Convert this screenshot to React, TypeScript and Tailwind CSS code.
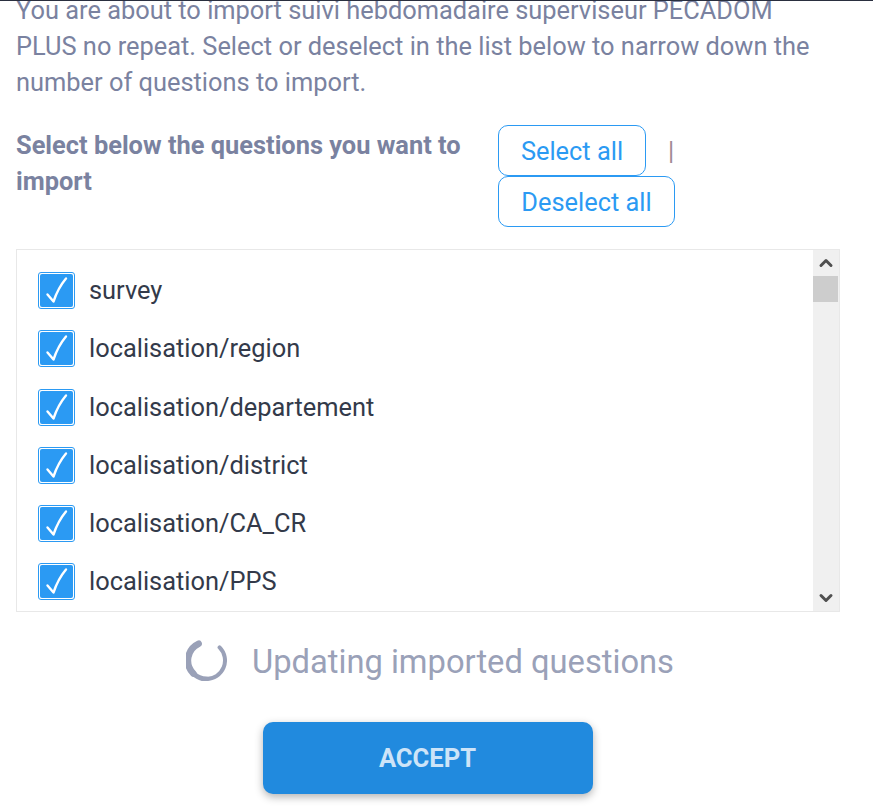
import { ChevronDown, ChevronUp } from 'lucide-react';

const questions = [
  'survey',
  'localisation/region',
  'localisation/departement',
  'localisation/district',
  'localisation/CA_CR',
  'localisation/PPS',
];

function CheckMark() {
  return (
    <span className="flex h-[37px] w-[37px] shrink-0 items-center justify-center rounded-[3px] border border-[#2b9af3] bg-white p-[1px]">
      <span className="flex h-full w-full items-center justify-center rounded-[2px] bg-[#2b9af3]">
        <svg width="33" height="33" viewBox="0 0 33 33" fill="none">
          <path d="M7.5 20.5 L13.5 27.5 Q18 14 26 4.5" stroke="#fff" strokeWidth="2.4" strokeLinecap="round" strokeLinejoin="round" />
        </svg>
      </span>
    </span>
  );
}

export default function App() {
  return (
    <div className="h-[811px] overflow-hidden border-t border-[#2a2f3f] bg-white font-['Roboto',sans-serif]">
      <div className="pl-4 pr-[33px]">
        <p className="-mt-[9px] w-[800px] text-[25.4px] leading-[36px] text-[#7a82a0]">
          You are about to import suivi hebdomadaire superviseur PECADOM PLUS no repeat. Select or deselect in the list below to narrow down the number of questions to import.
        </p>

        <div className="mt-[25px] flex">
          <p className="w-[482px] pt-[2px] text-[25.4px] font-bold leading-[36px] text-[#7a82a0]">
            Select below the questions you want to import
          </p>
          <div className="flex w-[200px] flex-col items-start">
            <div className="flex items-center">
              <button className="h-[51px] w-[148px] rounded-[10px] border border-[#2b9af3] pt-[2px] text-[25.4px] text-[#2b9af3]">Select all</button>
              <span className="ml-[22px] text-[25.4px] leading-[36px] text-[#a08a94]">|</span>
            </div>
            <button className="h-[51px] w-[177px] rounded-[10px] border border-[#2b9af3] pt-[2px] text-[25.4px] text-[#2b9af3]">Deselect all</button>
          </div>
        </div>

        <div className="mt-[22px] flex h-[363px] w-[824px] border border-[#e8e8e8]">
          <ul className="flex-1 pl-[21px] pt-[22px]">
            {questions.map((q) => (
              <li key={q} className="flex h-[58.25px] items-start gap-[14px]">
                <CheckMark />
                <span className="text-[25.4px] leading-[37px] text-[#333a4a]">{q}</span>
              </li>
            ))}
          </ul>
          <div className="flex w-[26px] flex-col bg-[#f0f0f0]">
            <div className="flex h-[26px] items-center justify-center">
              <ChevronUp size={20} strokeWidth={3.6} className="text-[#505050]" />
            </div>
            <div className="h-[26px] w-[25px] bg-[#cdcdcd]" />
            <div className="flex-1" />
            <div className="flex h-[26px] items-center justify-center">
              <ChevronDown size={20} strokeWidth={3.6} className="text-[#505050]" />
            </div>
          </div>
        </div>

        <div className="mt-[28px] flex h-[44px] items-center justify-center gap-[25px] pl-[4px]">
          <svg width="41" height="41" viewBox="0 0 41 41" fill="none" className="-mt-[3px]">
            <path d="M33.58 7.42 A18.5 18.5 0 0 1 20.5 39" stroke="#9aa1b8" strokeWidth="4" strokeLinecap="round" />
            <path d="M20.5 39 A18.5 18.5 0 0 1 7.42 33.58" stroke="#9aa1b8" strokeWidth="5" strokeLinecap="round" />
            <path d="M7.42 33.58 A18.5 18.5 0 0 1 12.68 3.73" stroke="#9aa1b8" strokeWidth="6.5" strokeLinecap="round" />
          </svg>
          <span className="text-[32.7px] leading-[44px] text-[#9aa1b8]">Updating imported questions</span>
        </div>

        <div className="mt-[38px] flex justify-center pr-[1px]">
          <button className="h-[72px] w-[330px] rounded-[10px] bg-[#218ade] text-[25.6px] font-bold text-[#cde4f8] shadow-[0_3px_8px_rgba(0,0,0,0.3)]">ACCEPT</button>
        </div>
      </div>
    </div>
  );
}
